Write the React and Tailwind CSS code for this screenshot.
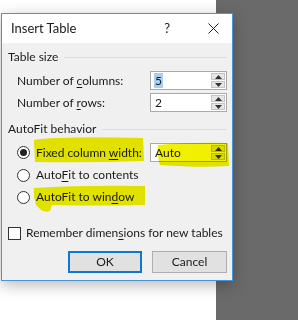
import React from 'react';

const U = ({ children }) => <span className="underline underline-offset-2">{children}</span>;

const Spinner = () => (
  <div className="flex flex-col justify-center gap-[1px] w-[15px] h-full py-[1px] pr-[1px]">
    <div className="flex-1 flex items-center justify-center bg-[#e6e6e6] border border-[#c4c4c4]">
      <svg width="7" height="4" viewBox="0 0 7 4"><path d="M3.5 0L7 4H0z" fill="#333" /></svg>
    </div>
    <div className="flex-1 flex items-center justify-center bg-[#e6e6e6] border border-[#c4c4c4]">
      <svg width="7" height="4" viewBox="0 0 7 4"><path d="M0 0H7L3.5 4z" fill="#333" /></svg>
    </div>
  </div>
);

const SpinBox = ({ value, selected }) => (
  <div className="flex items-stretch w-[77px] h-[19px] bg-white border border-[#a9a9a9] shrink-0">
    <div className="flex-1 flex items-center pl-[3px]">
      <span className={selected ? 'bg-[#a6cff2] px-[1px] leading-[15px]' : 'px-[1px]'}>{value}</span>
    </div>
    <Spinner />
  </div>
);

const GroupHeader = ({ children }) => (
  <div className="flex items-center h-[16px] gap-[6px]">
    <span className="whitespace-nowrap">{children}</span>
    <div className="flex-1 h-px bg-[#dcdcdc]" />
  </div>
);

const Radio = ({ checked }) => (
  <div className="w-[13px] h-[13px] rounded-full border border-[#333] bg-white flex items-center justify-center shrink-0">
    {checked && <div className="w-[7px] h-[7px] rounded-full bg-[#222]" />}
  </div>
);

export default function App() {
  return (
    <div
      className="relative w-[298px] h-[320px] flex overflow-hidden text-[12px] text-[#1a1a1a] whitespace-nowrap"
      style={{ fontFamily: 'Lato, "Noto Sans", sans-serif' }}
    >
      <div className="w-[216px] bg-white" />
      <div className="flex-1 bg-[#6a6a6a]" />

      <div className="absolute left-[1px] top-[13px] w-[232px] flex flex-col border border-[#4a94d4] bg-[#f0f0f0] shadow-[0_4px_14px_rgba(0,0,0,0.28)]">
        <div className="h-[29px] bg-white flex items-center pl-[9px] pr-[13px]">
          <span className="flex-1 text-[13px]">Insert Table</span>
          <span className="text-[13px] mr-[38px]">?</span>
          <svg width="11" height="11" viewBox="0 0 11 11">
            <path d="M0.5 0.5L10.5 10.5M10.5 0.5L0.5 10.5" stroke="#222" strokeWidth="1" />
          </svg>
        </div>

        <div className="flex flex-col pl-[6px] pr-[5px] pt-[6px] pb-[7px]">
          <GroupHeader>Table size</GroupHeader>
          <div className="flex flex-col gap-[3px] mt-[6px] pl-[9px]">
            <div className="flex items-center justify-between">
              <span>Number of <U>c</U>olumns:</span>
              <SpinBox value="5" selected />
            </div>
            <div className="flex items-center justify-between">
              <span>Number of <U>r</U>ows:</span>
              <SpinBox value="2" />
            </div>
          </div>

          <div className="mt-[9px]">
            <GroupHeader>AutoFit behavior</GroupHeader>
          </div>
          <div className="flex flex-col mt-[4px] pl-[9px]">
            <div className="h-[23px] flex items-center justify-between">
              <div className="flex items-center gap-[6px]">
                <Radio checked />
                <span>Fixed column <U>w</U>idth:</span>
              </div>
              <SpinBox value="Auto" />
            </div>
            <div className="h-[22px] flex items-center gap-[6px]">
              <Radio />
              <span>Auto<U>F</U>it to contents</span>
            </div>
            <div className="h-[22px] flex items-center gap-[6px]">
              <Radio />
              <span>AutoFit to win<U>d</U>ow</span>
            </div>
          </div>

          <div className="h-[18px] mt-[16px] flex items-center gap-[5px]">
            <div className="w-[13px] h-[13px] border border-[#333] bg-white shrink-0" />
            <span>Remember dimen<U>s</U>ions for new tables</span>
          </div>

          <div className="flex justify-end gap-[10px] mt-[9px]">
            <button className="w-[74px] h-[22px] bg-[#e1e1e1] border-2 border-[#0a78d4]">OK</button>
            <button className="w-[75px] h-[22px] bg-[#e1e1e1] border border-[#adadad]">Cancel</button>
          </div>
        </div>
      </div>

      <svg className="absolute left-0 top-0 pointer-events-none mix-blend-multiply" width="298" height="320" viewBox="0 0 298 320">
        <path d="M34 140 Q60 136 143 138 L144 161 Q90 163 35 162 Z" fill="#f0f000" />
        <path d="M158 145 Q190 142 228 143 L229 166 Q200 168 160 165 Q157 156 158 145 Z" fill="#f0f000" />
        <path d="M34 188 Q80 185 145 186 L145 205 Q100 206 52 205 L50 211 Q44 213 40 209 L36 205 Q33 196 34 188 Z" fill="#f0f000" />
      </svg>
    </div>
  );
}
